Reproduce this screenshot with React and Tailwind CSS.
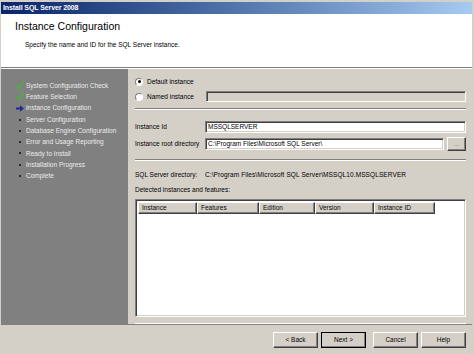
const STEPS = [
  { label: 'System Configuration Check', state: 'done' },
  { label: 'Feature Selection', state: 'done' },
  { label: 'Instance Configuration', state: 'current' },
  { label: 'Server Configuration' },
  { label: 'Database Engine Configuration' },
  { label: 'Error and Usage Reporting' },
  { label: 'Ready to Install' },
  { label: 'Installation Progress' },
  { label: 'Complete' },
]

const COLUMNS = [
  { label: 'Instance', w: 'w-[59px]' },
  { label: 'Features', w: 'w-[62px]' },
  { label: 'Edition', w: 'w-[56px]' },
  { label: 'Version', w: 'w-[59px]' },
  { label: 'Instance ID', w: 'w-[61px]' },
]

const sunken = 'border border-t-[#808080] border-l-[#808080] border-b-white border-r-white shadow-[inset_1px_1px_0_#404040,inset_-1px_-1px_0_#d4d0c8]'
const raised = 'border border-t-white border-l-white border-b-[#404040] border-r-[#404040] shadow-[inset_-1px_-1px_0_#808080]'

function StepIcon({ state }) {
  if (state === 'done') {
    return (
      <svg width="8" height="9" viewBox="0 0 8 9">
        <path d="M0.8 5 L3 7.8 L7.4 0.8" fill="none" stroke="#49b23a" strokeWidth="1.8" />
      </svg>
    )
  }
  if (state === 'current') {
    return (
      <svg width="8" height="7" viewBox="0 0 8 7">
        <path d="M0 2.4 H4 V0.3 L7.9 3.5 L4 6.7 V4.6 H0 Z" fill="#1c2a8a" />
      </svg>
    )
  }
  return <span className="block w-[2px] h-[2px] ml-[3px] bg-[#2a2a2a]" />
}

function Radio({ checked, label }) {
  return (
    <div className="flex items-center h-[11px]">
      <span className="w-[8px] h-[8px] rounded-full border border-t-[#808080] border-l-[#808080] border-b-white border-r-white bg-white flex items-center justify-center shrink-0">
        {checked && <span className="w-[3px] h-[3px] rounded-full bg-black" />}
      </span>
      <span className="ml-[4px]">{label}</span>
    </div>
  )
}

function Button({ children, primary }) {
  return (
    <button
      className={`h-[16px] w-[45px] flex items-center justify-center bg-[#d4d0c8] ${primary ? 'outline outline-1 outline-black -outline-offset-1 ' : ''}${raised}`}
    >
      {children}
    </button>
  )
}

export default function App() {
  return (
    <div
      className="w-[474px] h-[354px] bg-[#d4d0c8] flex flex-col pt-[2px] pl-[1px] pr-[2px] text-[6.5px] text-black overflow-hidden"
      style={{ fontFamily: '"Liberation Sans", Arial, sans-serif' }}
    >
      {/* Title bar */}
      <div className="h-[12px] shrink-0 flex items-center px-[2px] bg-gradient-to-r from-[#0a246a] to-[#a6caf0]">
        <span className="text-white font-bold text-[7px] tracking-[-0.1px]">Install SQL Server 2008</span>
      </div>

      {/* Header */}
      <div className="h-[54px] shrink-0 bg-white border-b border-[#808080] flex flex-col pl-[14px]">
        <div className="text-[10.5px] mt-[5px] leading-[14px]">Instance Configuration</div>
        <div className="ml-[10px] mt-[7px]">Specify the name and ID for the SQL Server instance.</div>
      </div>

      {/* Body */}
      <div className="flex flex-1 min-h-0 border-t border-white">
        <aside className="w-[127px] shrink-0 bg-[#808080] pt-[11px] text-[#ececec]">
          {STEPS.map((s) => (
            <div key={s.label} className="flex items-center h-[11.3px]">
              <span className="w-[25px] pl-[15px] flex items-center">
                <StepIcon state={s.state} />
              </span>
              <span>{s.label}</span>
            </div>
          ))}
        </aside>

        <main className="flex-1 flex flex-col pl-[7px] pr-[6px] pt-[7px]">
          <Radio checked label="Default instance" />
          <div className="flex items-center mt-[4px]">
            <div className="w-[71px]">
              <Radio label="Named instance" />
            </div>
            <div className={`flex-1 h-[11px] bg-[#d4d0c8] ${sunken}`} />
          </div>

          <div className="mt-[6px] border-t border-t-[#808080] border-b border-b-white" />

          <div className="flex items-center mt-[11px]">
            <span className="w-[70px]">Instance Id</span>
            <div className={`flex-1 h-[12px] bg-white flex items-center px-[2px] ${sunken}`}>MSSQLSERVER</div>
          </div>
          <div className="flex items-center mt-[4px]">
            <span className="w-[70px]">Instance root directory</span>
            <div className={`flex-1 h-[12px] bg-white flex items-center px-[2px] ${sunken}`}>C:\Program Files\Microsoft SQL Server\</div>
            <button className={`ml-[3px] w-[19px] h-[14px] bg-[#d4d0c8] flex items-center justify-center text-[#808080] ${raised}`}>...</button>
          </div>

          <div className="mt-[8px] border-t border-t-[#808080] border-b border-b-white" />

          <div className="flex items-center mt-[9px] h-[10px]">
            <span className="w-[70px]">SQL Server directory:</span>
            <span className="tracking-[0.1px]">C:\Program Files\Microsoft SQL Server\MSSQL10.MSSQLSERVER</span>
          </div>
          <div className="mt-[5px] h-[10px]">Detected instances and features:</div>

          <div className={`mt-[4px] h-[118px] bg-white flex flex-col p-[2px] ${sunken}`}>
            <div className="flex h-[12px]">
              {COLUMNS.map((c) => (
                <div key={c.label} className={`${c.w} h-full bg-[#d4d0c8] flex items-center pl-[3px] ${raised}`}>
                  {c.label}
                </div>
              ))}
            </div>
          </div>
          <div className="mt-auto h-[7px] border-b border-white" />
        </main>
      </div>

      {/* Footer */}
      <div className="h-[30px] shrink-0 flex items-center justify-end gap-[3px] pr-[6px] border-t border-[#808080] pt-[1px]">
        <Button>&lt; Back</Button>
        <Button primary>Next &gt;</Button>
        <div className="w-[1px]" />
        <Button>Cancel</Button>
        <Button>Help</Button>
      </div>
    </div>
  )
}
